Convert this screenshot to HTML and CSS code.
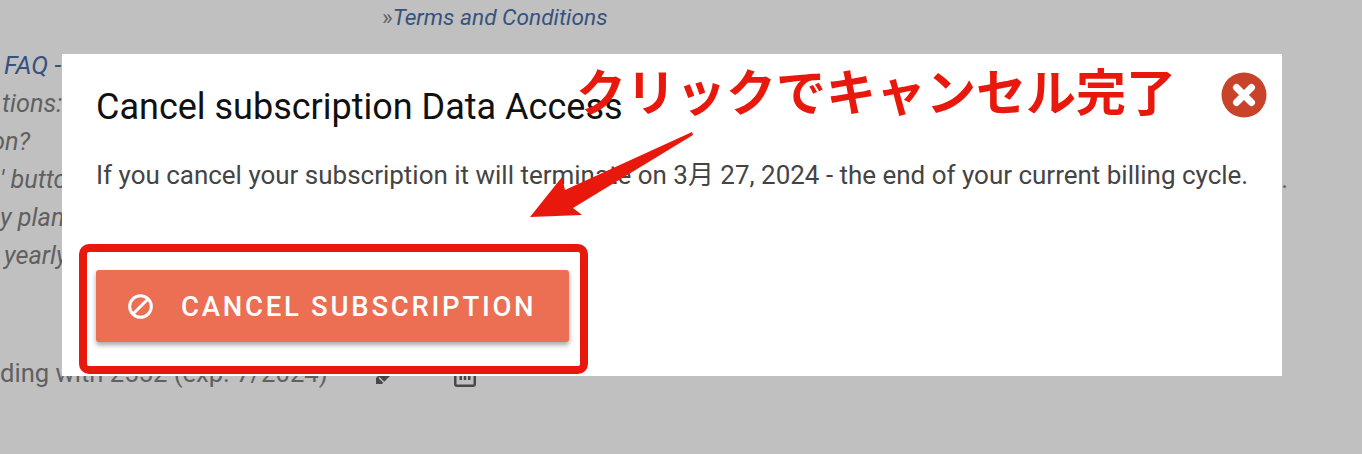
FILE: index.html
```html
<!DOCTYPE html>
<html lang="ja">
<head>
<meta charset="utf-8">
<title>Cancel subscription</title>
<link rel="stylesheet" href="styles.css">
</head>
<body>
<main class="page">
  <p class="terms"><span class="quote">»</span><a class="link">Terms and Conditions</a></p>
  <div class="faq">
    <p class="line indent link">FAQ -</p>
    <p class="line tions">tions:</p>
    <p class="line pull">on?</p>
    <p class="line split"><span>' button</span><span class="dot">e.</span></p>
    <p class="line">y plan</p>
    <p class="line indent">yearly</p>
  </div>
  <div class="card-row">
    <span class="card-text">ding with 2552 (exp. 7/2024)</span>
    <svg class="pencil" viewBox="0 0 24 24"><path d="M1 23v-6L15 3l6 6L7 23z"/><path class="notch" d="M4 16.500 9 21.500"/></svg>
    <svg class="trash" viewBox="0 0 24 30"><path d="M3 3h18a2 2 0 0 1 2 2v21a3 3 0 0 1-3 3H4a3 3 0 0 1-3-3V5a2 2 0 0 1 2-2zm1 2.500a.5.5 0 0 0-.5.5v20a.5.5 0 0 0 .5.5h16a.5.5 0 0 0 .5-.5V6a.5.5 0 0 0-.5-.5zM6.500 8H9v14H6.500zm4.300 0h2.400v14h-2.400zm4.200 0h2.500v14H15z"/></svg>
  </div>
</main>

<section class="modal">
  <h2 class="modal-title">Cancel subscription Data Access</h2>
  <p class="modal-text">If you cancel your subscription it will terminate on 3月 27, 2024 - the end of your current billing cycle.</p>
  <button class="cancel-btn">
    <svg class="ban" viewBox="0 0 24 24"><circle cx="12" cy="12" r="10.400" fill="none" stroke="#fff" stroke-width="2.900"/><path d="M5.500 18.500 18.500 5.500" stroke="#fff" stroke-width="2.900"/></svg>
    <span>CANCEL SUBSCRIPTION</span>
  </button>
</section>

<svg class="close" viewBox="0 0 46 46"><circle cx="23" cy="23" r="22.500" fill="#c8432a"/><path d="M15.500 15.500 30.500 30.500M30.500 15.500 15.500 30.500" stroke="#fff" stroke-width="7" stroke-linecap="round"/></svg>

<div class="highlight"></div>
<p class="callout">クリックでキャンセル完了</p>
<svg class="arrow" viewBox="0 0 170 90"><path d="M0 85 32 45 35 58 162 0 163 3 43 76 52 83Z" fill="#e8190c"/></svg>
</body>
</html>
```
FILE: styles.css
```css
html, body { margin: 0; height: 454px; overflow: hidden; }
body { position: relative; background: #c0c0c0; font-family: Roboto, "Liberation Sans", sans-serif; color: #606060; }
.page { height: 454px; overflow: hidden; }
p { margin: 0; }
.terms { padding: 5px 0 0 382px; font-size: 22.700px; line-height: 26px; font-style: italic; }
.quote { font-style: normal; }
.link { color: #36527f; }
.faq { margin-top: 16px; font-style: italic; font-size: 25.300px; line-height: 38px; white-space: nowrap; }
.indent { padding-left: 4px; }
.tions { padding-left: 2px; }
.pull { margin-left: -9px; }
.split { display: flex; justify-content: space-between; padding-right: 74px; }
.dot { font-style: normal; }
.card-row { display: flex; align-items: center; height: 38px; margin-top: 79px; font-size: 25.600px; white-space: nowrap; }
.card-text { width: 375px; }
.pencil { width: 24px; height: 28px; fill: #484848; margin-right: 54px; }
.notch { fill: none; stroke: #c0c0c0; stroke-width: 1.500; }
.trash { width: 24px; height: 30px; fill: #484848; }
.modal { position: absolute; left: 62px; top: 54px; width: 1220px; height: 322px; box-sizing: border-box; padding: 32px 34px; background: #fff; }
.modal-title { margin: 0; font-size: 36px; font-weight: 400; line-height: 42px; color: #111; }
.modal-text { margin-top: 31px; font-size: 25.970px; line-height: 32px; color: #444; white-space: nowrap; font-family: Roboto, "Noto Sans CJK JP", sans-serif; }
.cancel-btn { display: flex; align-items: center; margin-top: 79px; width: 473px; height: 72px; padding: 0 0 0 32px; border: 0; border-radius: 3px; background: #ec6e53; color: #fff; font: 500 27.500px Roboto, sans-serif; letter-spacing: 2.750px; box-shadow: 0 3px 5px rgba(0,0,0,.35); }
.ban { width: 25px; height: 25px; margin-right: 28px; }
.close { position: absolute; left: 1221px; top: 72px; width: 46px; height: 46px; }
.highlight { position: absolute; left: 79px; top: 244px; width: 509px; height: 130px; box-sizing: border-box; border: 8px solid #e8190c; border-radius: 10px; }
.callout { position: absolute; left: 576px; top: 56px; font: 700 50px/66px "Noto Sans CJK JP", sans-serif; color: #e8190c; white-space: nowrap; }
.arrow { position: absolute; left: 530px; top: 132px; width: 170px; height: 90px; }
```
